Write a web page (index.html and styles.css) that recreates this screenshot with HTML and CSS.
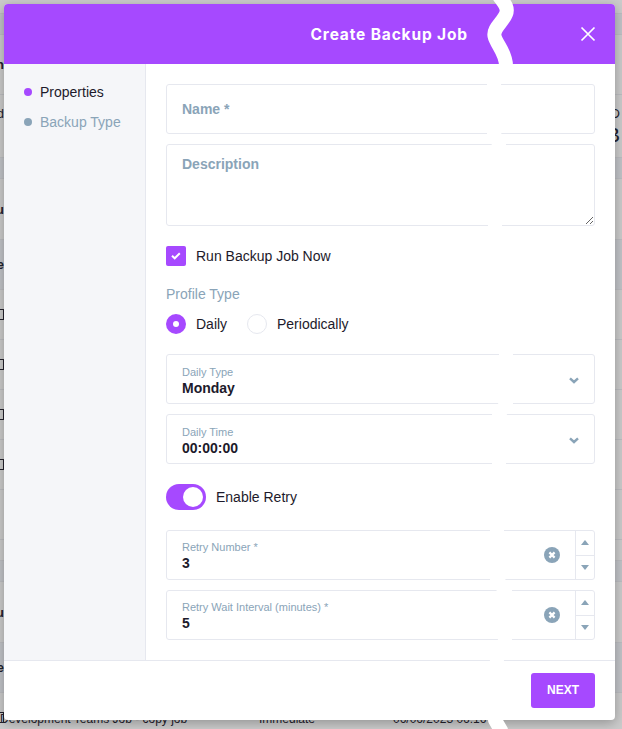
FILE: index.html
```html
<!DOCTYPE html>
<html lang="en">

<head>
    <meta charset="UTF-8">
    <title>Create Backup Job</title>
    <link rel="stylesheet" href="styles.css">
</head>

<body>

    <div class="page">
        <div class="row h13"></div>
        <div class="row h21 shade"></div>
        <div class="row h60"><span class="edge edgeBold">n</span></div>
        <div class="row h63">
            <span class="edge edgeUp">d</span>
            <div class="edgeRight">
                <span>D</span>
                <span class="big">B</span>
            </div>
        </div>
        <div class="row h21 shade"></div>
        <div class="row h61"><span class="edge edgeBold">u</span></div>
        <div class="row h50 shade"><span class="edge edgeBold">e</span></div>
        <div class="row h50"><span class="edge box"></span></div>
        <div class="row h50"><span class="edge box"></span></div>
        <div class="row h50"><span class="edge box"></span></div>
        <div class="row h50"><span class="edge box"></span></div>
        <div class="row h50"></div>
        <div class="row h21"></div>
        <div class="row h21 shade"></div>
        <div class="row h61"><span class="edge edgeBold">u</span></div>
        <div class="row h50 shade"><span class="edge edgeBold">e</span></div>
        <div class="row lastRow">
            <span class="edge box lastBox"></span>
            <span class="jobName">Development Teams Job - copy job</span>
            <span class="jobType">Immediate</span>
            <span class="jobDate">06/06/2023 06:16</span>
        </div>
    </div>

    <div class="modal">
        <header class="modalHead">
            <h1>Create Backup Job</h1>
            <svg class="closeIcon" width="16" height="16" viewBox="0 0 16 16">
                <path d="M1.5 1.5L14.5 14.5M14.5 1.5L1.5 14.5" />
            </svg>
        </header>

        <div class="modalBody">
            <ul class="steps">
                <li class="active">Properties</li>
                <li>Backup Type</li>
            </ul>

            <form class="form">
                <input class="textInput" type="text" placeholder="Name *">
                <textarea class="textArea" placeholder="Description"></textarea>

                <div class="checkRow">
                    <span class="checkBox">
                        <svg width="10" height="8" viewBox="0 0 10 8">
                            <path d="M1 3.8L3.7 6.3L8.8 1.2" />
                        </svg>
                    </span>
                    Run Backup Job Now
                </div>

                <div class="profileType">Profile Type</div>
                <div class="radioRow">
                    <span class="radio on"></span>
                    <span class="radioText">Daily</span>
                    <span class="radio"></span>
                    <span>Periodically</span>
                </div>

                <div class="field selectField">
                    <div class="fieldText">
                        <label>Daily Type</label>
                        <b>Monday</b>
                    </div>
                    <svg class="chevron" width="10" height="7" viewBox="0 0 10 7">
                        <path d="M1 1.3L5 5L9 1.3" />
                    </svg>
                </div>
                <div class="field selectField">
                    <div class="fieldText">
                        <label>Daily Time</label>
                        <b>00:00:00</b>
                    </div>
                    <svg class="chevron" width="10" height="7" viewBox="0 0 10 7">
                        <path d="M1 1.3L5 5L9 1.3" />
                    </svg>
                </div>

                <div class="switchRow">
                    <span class="switch"><i></i></span>
                    Enable Retry
                </div>

                <div class="field numberField">
                    <div class="fieldText">
                        <label>Retry Number *</label>
                        <b>3</b>
                    </div>
                    <svg class="clearIcon" width="16" height="16" viewBox="0 0 16 16">
                        <circle cx="8" cy="8" r="8" />
                        <path d="M5.4 5.4L10.6 10.6M10.6 5.4L5.4 10.6" />
                    </svg>
                    <div class="stepper">
                        <span><i class="up"></i></span>
                        <span><i class="down"></i></span>
                    </div>
                </div>
                <div class="field numberField">
                    <div class="fieldText">
                        <label>Retry Wait Interval (minutes) *</label>
                        <b>5</b>
                    </div>
                    <svg class="clearIcon" width="16" height="16" viewBox="0 0 16 16">
                        <circle cx="8" cy="8" r="8" />
                        <path d="M5.4 5.4L10.6 10.6M10.6 5.4L5.4 10.6" />
                    </svg>
                    <div class="stepper">
                        <span><i class="up"></i></span>
                        <span><i class="down"></i></span>
                    </div>
                </div>
            </form>
        </div>

        <footer class="modalFoot">
            <button class="nextBtn" type="button">NEXT</button>
        </footer>
    </div>

    <!-- white torn strip over the whole dialog -->
    <svg class="tear" width="622" height="729" viewBox="0 0 622 729">
        <path d="M499 -4C503 2 509 7 506 14C503 22 493 28 494.5 36C496 44 506 52 506 66L494 82L494 135L499 143L499 200L495 224L495 228L506 350L506 405L499 413L499 465L497 528L497 581L505 589L505 641L497 658L495 720L502 732" />
    </svg>

</body>

</html>
```

FILE: styles.css
```css
* {
    margin: 0;
    padding: 0;
    list-style: none;
    box-sizing: border-box;
}

html,
body {
    width: 100%;
    height: 100%;
    overflow: hidden;
}

body {
    font-family: "Liberation Sans", Arial, sans-serif;
    color: #1d1a2b;
    background: #cbcbcb;
}

/* dimmed table behind the dialog */
.page {
    width: 622px;
    height: 729px;
    display: flex;
    flex-direction: column;
    overflow: hidden;
}

.row {
    flex-shrink: 0;
    display: flex;
    justify-content: space-between;
    align-items: center;
    border-bottom: solid 1px #bcbdc1;
    color: #23212c;
    font-size: 13px;
}

.shade {
    background: #c1c3c7;
}

.h13 { height: 14px; }
.h21 { height: 21px; }
.h50 { height: 50px; }
.h60 { height: 60px; }
.h61 { height: 61px; }
.h63 { height: 63px; }

.edge {
    width: 4px;
    display: flex;
    justify-content: flex-end;
    overflow: hidden;
}

.edgeBold {
    font-weight: 700;
}

.edgeUp {
    margin-top: -25px;
}

.box {
    height: 11px;
    border: solid 1px #23212c;
    border-left: 0;
    width: 4px;
}

.edgeRight {
    width: 7px;
    padding-right: 2px;
    overflow: hidden;
    display: flex;
    flex-direction: column;
    align-items: flex-end;
    margin-top: 2px;
    line-height: 16px;
}

.big {
    font-size: 21px;
    line-height: 26px;
}

.lastRow {
    height: 37px;
    border: 0;
    justify-content: flex-start;
    align-items: flex-end;
    padding-bottom: 3px;
    font-size: 12px;
    line-height: 16px;
}

.lastBox {
    flex-shrink: 0;
    margin-right: -4px;
    margin-bottom: 4px;
}

.jobName {
    width: 259px;
}

.jobType {
    width: 134px;
}

.modal {
    position: absolute;
    left: 4px;
    top: 4px;
    width: 611px;
    height: 716px;
    display: flex;
    flex-direction: column;
    background: #fff;
    border-radius: 4px;
    overflow: hidden;
    box-shadow: 0 3px 12px rgba(0, 0, 0, 0.28);
}

.modalHead {
    height: 60px;
    flex-shrink: 0;
    display: flex;
    align-items: center;
    justify-content: flex-end;
    padding-right: 19px;
    background: #a649ff;
}

.modalHead h1 {
    margin-right: 112px;
    font-family: Inter, "Liberation Sans", sans-serif;
    font-size: 15.5px;
    font-weight: 700;
    letter-spacing: 0.85px;
    color: #fff;
}

.closeIcon path {
    fill: none;
    stroke: #fff;
    stroke-width: 1.7;
}

.modalBody {
    flex: 1;
    display: flex;
    min-height: 0;
}

.steps {
    width: 142px;
    flex-shrink: 0;
    padding-top: 13px;
    background: #f5f6f9;
    border-right: solid 1px #e6e8ef;
}

.steps li {
    height: 30px;
    display: flex;
    align-items: center;
    padding-left: 20px;
    font-size: 14px;
    color: #8aa4b8;
}

.steps li::before {
    content: "";
    width: 8px;
    height: 8px;
    margin-right: 8px;
    border-radius: 50%;
    background: #8aa4b8;
}

.steps li.active {
    color: #1d1a2b;
}

.steps li.active::before {
    background: #a649ff;
}

.form {
    flex: 1;
    padding: 20px;
    display: flex;
    flex-direction: column;
}

.textInput,
.textArea {
    display: block;
    width: 100%;
    border: solid 1px #e6e8ef;
    border-radius: 3px;
    outline: 0;
    padding: 0 15px;
    font-family: inherit;
    font-size: 14px;
    font-weight: 700;
    background: #fff;
}

.textInput {
    height: 50px;
    flex-shrink: 0;
}

.textArea {
    height: 82px;
    flex-shrink: 0;
    margin-top: 10px;
    padding-top: 11px;
}

.textInput::placeholder,
.textArea::placeholder {
    color: #8aa4b8;
    opacity: 1;
}

.checkRow {
    margin-top: 20px;
    height: 20px;
    display: flex;
    align-items: center;
    font-size: 14px;
}

.checkBox {
    width: 20px;
    height: 20px;
    margin-right: 10px;
    display: flex;
    align-items: center;
    justify-content: center;
    border-radius: 2px;
    background: #a649ff;
}

.checkBox path {
    fill: none;
    stroke: #fff;
    stroke-width: 2;
}

.profileType {
    margin-top: 18px;
    height: 20px;
    line-height: 20px;
    font-size: 14px;
    color: #8aa4b8;
}

.radioRow {
    margin-top: 10px;
    height: 20px;
    display: flex;
    align-items: center;
    font-size: 14px;
}

.radio {
    width: 20px;
    height: 20px;
    margin-right: 10px;
    border: solid 1px #e6e8ef;
    border-radius: 50%;
}

.radio.on {
    border: 0;
    background: #a649ff;
    display: flex;
    align-items: center;
    justify-content: center;
}

.radio.on::after {
    content: "";
    width: 6px;
    height: 6px;
    border-radius: 50%;
    background: #fff;
}

.radioText {
    width: 51px;
}

.field {
    height: 50px;
    flex-shrink: 0;
    display: flex;
    align-items: center;
    border: solid 1px #e6e8ef;
    border-radius: 3px;
}

.selectField {
    padding-right: 15px;
    margin-top: 10px;
}

.radioRow + .selectField {
    margin-top: 20px;
}

.fieldText {
    flex: 1;
    padding: 2px 0 0 15px;
}

.selectField .fieldText {
    padding-top: 4px;
}

.fieldText label {
    display: block;
    font-size: 11px;
    line-height: 14px;
    color: #8aa4b8;
}

.fieldText b {
    display: block;
    font-size: 14px;
    line-height: 18px;
    font-weight: 700;
}

.chevron {
    margin-top: 2px;
}

.chevron path {
    fill: none;
    stroke: #8aa4b8;
    stroke-width: 2.4;
}

.switchRow {
    margin-top: 20px;
    height: 26px;
    display: flex;
    align-items: center;
    font-size: 14px;
}

.switch {
    width: 40px;
    height: 26px;
    margin-right: 10px;
    padding: 3px;
    display: flex;
    justify-content: flex-end;
    border-radius: 13px;
    background: #a649ff;
}

.switch i {
    width: 20px;
    height: 20px;
    border-radius: 50%;
    background: #fff;
}

.numberField {
    margin-top: 10px;
}

.switchRow + .numberField {
    margin-top: 20px;
}

.clearIcon {
    margin-right: 15px;
}

.clearIcon circle {
    fill: #8aa4b8;
}

.clearIcon path {
    fill: none;
    stroke: #fff;
    stroke-width: 2.2;
}

.stepper {
    width: 19px;
    height: 100%;
    display: flex;
    flex-direction: column;
    border-left: solid 1px #e6e8ef;
}

.stepper span {
    flex: 1;
    display: flex;
    align-items: center;
    justify-content: center;
}

.stepper span + span {
    border-top: solid 1px #e6e8ef;
}

.stepper i {
    width: 0;
    height: 0;
    border-left: solid 4.5px transparent;
    border-right: solid 4.5px transparent;
}

.stepper .up {
    border-bottom: solid 5px #8aa4b8;
}

.stepper .down {
    border-top: solid 5px #8aa4b8;
}

.modalFoot {
    height: 60px;
    flex-shrink: 0;
    display: flex;
    align-items: center;
    justify-content: flex-end;
    padding: 0 20px 1px;
    border-top: solid 1px #e6e8ef;
}

.nextBtn {
    width: 64px;
    height: 35px;
    border: 0;
    border-radius: 3px;
    font-family: inherit;
    font-size: 12px;
    font-weight: 700;
    color: #fff;
    background: #a649ff;
}

.tear {
    position: absolute;
    left: 0;
    top: 0;
    pointer-events: none;
}

.tear path {
    fill: none;
    stroke: #fff;
    stroke-width: 14;
    stroke-linejoin: round;
}
```
